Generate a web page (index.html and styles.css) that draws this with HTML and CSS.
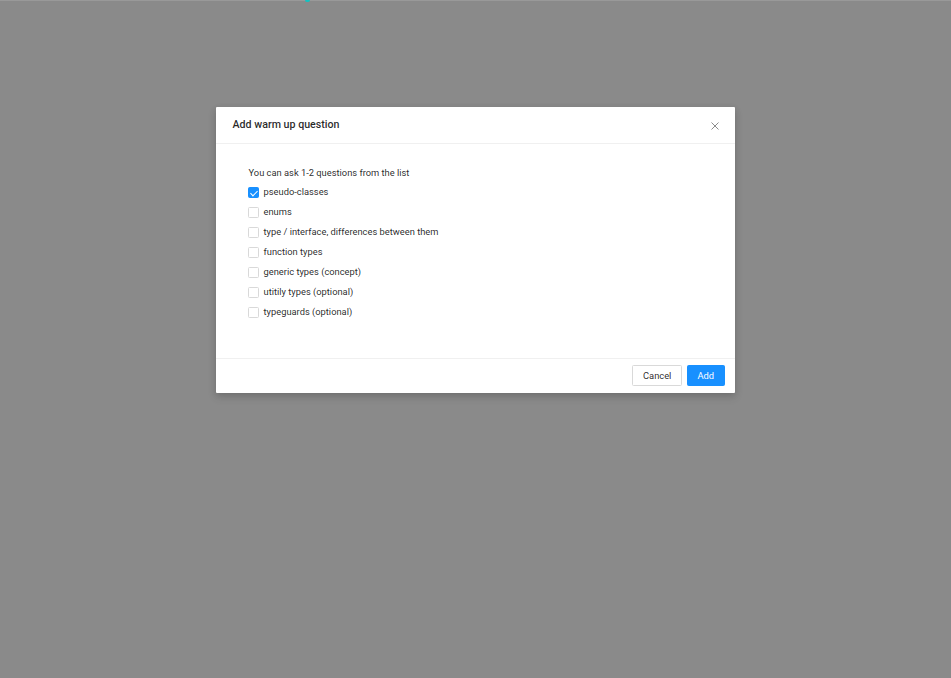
FILE: index.html
```html
<!DOCTYPE html>
<html lang="en">
<head>
    <meta charset="UTF-8">
    <meta name="viewport" content="width=device-width, initial-scale=1.0">
    <title>Add warm up question</title>
    <link rel="stylesheet" href="styles.css">
</head>
<body>
    <div class="top-bar"><span class="top-dot"></span></div>

    <div class="mask">
        <div class="modal">
            <div class="modal-header">
                <div class="modal-title">Add warm up question</div>
                <button class="modal-close" aria-label="Close">
                    <svg width="8" height="8" viewBox="0 0 8 8">
                        <path d="M0.5 0.5 L7.5 7.5 M7.5 0.5 L0.5 7.5" stroke="#8c8c8c" stroke-width="1" fill="none"/>
                    </svg>
                </button>
            </div>

            <div class="modal-body">
                <p class="hint">You can ask 1-2 questions from the list</p>
                <ul class="question-list">
                    <li><label class="check"><span class="box checked"></span>pseudo-classes</label></li>
                    <li><label class="check"><span class="box"></span>enums</label></li>
                    <li><label class="check"><span class="box"></span>type / interface, differences between them</label></li>
                    <li><label class="check"><span class="box"></span>function types</label></li>
                    <li><label class="check"><span class="box"></span>generic types (concept)</label></li>
                    <li><label class="check"><span class="box"></span>utitily types (optional)</label></li>
                    <li><label class="check"><span class="box"></span>typeguards (optional)</label></li>
                </ul>
            </div>

            <div class="modal-footer">
                <button class="btn">Cancel</button>
                <button class="btn btn-primary">Add</button>
            </div>
        </div>
    </div>
</body>
</html>
```

FILE: styles.css
```css
:root {
    --primary-color: #1890ff;
    --text-color: rgba(0, 0, 0, 0.85);
    --border-color: #d9d9d9;
    --split-color: #f0f0f0;
}

* {
    margin: 0;
    padding: 0;
    box-sizing: border-box;
}

body {
    font-family: Roboto, 'Helvetica Neue', Arial, sans-serif;
    font-size: 9.33px;
    line-height: 1.5715;
    color: var(--text-color);
    background-color: #8a8a8a;
    height: 678px;
    overflow: hidden;
}

.top-bar {
    height: 1px;
    background-color: #999;
    position: relative;
}

.top-dot {
    position: absolute;
    left: 305px;
    top: 0;
    width: 5px;
    height: 2px;
    border-radius: 0 0 3px 3px;
    background-color: #13c2c2;
}

.mask {
    display: flex;
    justify-content: center;
    padding-top: 106px;
}

.modal {
    width: 519px;
    background-color: white;
    border-radius: 1px;
    box-shadow: 0 4px 10px rgba(0, 0, 0, 0.12), 0 2px 6px rgba(0, 0, 0, 0.1);
    margin-left: -1px;
}

.modal-header {
    display: flex;
    justify-content: space-between;
    align-items: center;
    height: 37px;
    padding: 1px 16px 0 17px;
    border-bottom: 1px solid var(--split-color);
}

.modal-title {
    font-size: 10.67px;
    font-weight: 500;
    color: var(--text-color);
}

.modal-close {
    background: none;
    border: none;
    width: 16px;
    height: 16px;
    display: flex;
    align-items: center;
    justify-content: center;
    margin-right: -4px;
    cursor: pointer;
}

.modal-body {
    padding: 21px 16px 36px 33px;
}

.hint {
    line-height: 15px;
    margin-bottom: 2px;
}

.question-list {
    list-style: none;
}

.question-list li {
    height: 20px;
    display: flex;
    align-items: center;
}

.check {
    display: flex;
    align-items: center;
    gap: 5px;
    margin-left: -1px;
    cursor: pointer;
}

.box {
    width: 11px;
    height: 11px;
    border: 1px solid var(--border-color);
    border-radius: 1.5px;
    background-color: white;
    position: relative;
}

.box.checked {
    background-color: var(--primary-color);
    border-color: var(--primary-color);
}

.box.checked::after {
    content: '';
    position: absolute;
    left: 3px;
    top: 1px;
    width: 3px;
    height: 6px;
    border: solid white;
    border-width: 0 1.5px 1.5px 0;
    transform: rotate(45deg);
}

.modal-footer {
    display: flex;
    justify-content: flex-end;
    gap: 5px;
    padding: 6px 10px 7px;
    border-top: 1px solid var(--split-color);
}

.btn {
    font-family: inherit;
    font-size: 9.33px;
    height: 21px;
    padding: 0 9.5px;
    border: 1px solid var(--border-color);
    border-radius: 1.5px;
    background-color: white;
    color: var(--text-color);
    cursor: pointer;
}

.btn-primary {
    background-color: var(--primary-color);
    border-color: var(--primary-color);
    color: white;
}
```
